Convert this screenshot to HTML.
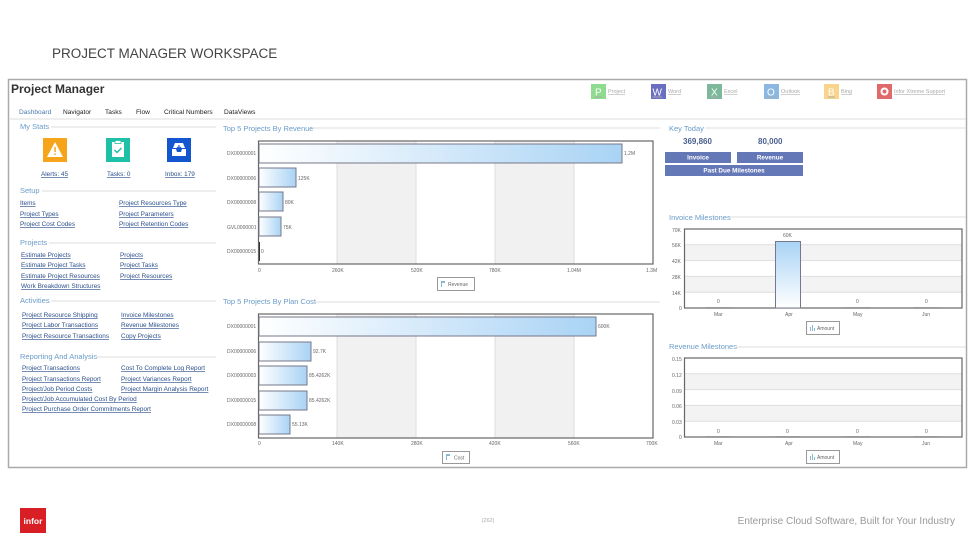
<!DOCTYPE html>
<html><head><meta charset="utf-8"><style>
html,body{margin:0;padding:0;background:#fff;width:975px;height:548px;overflow:hidden}
svg{display:block;font-family:"Liberation Sans",sans-serif}
.l{fill:#2b4f8a;font-size:6.4px;text-decoration:underline}
.h{fill:#6a9bc9;font-size:7.5px}
.ax{fill:#666;font-size:5px}
.tab{fill:#222;font-size:6.6px}
</style></head><body>
<svg width="975" height="548" viewBox="0 0 975 548">
<defs>
<linearGradient id="g" x1="0" x2="1" y1="0" y2="0"><stop offset="0" stop-color="#fff"/><stop offset="1" stop-color="#a9d3f5"/></linearGradient>
<linearGradient id="gv" x1="0" x2="0" y1="0" y2="1"><stop offset="0" stop-color="#a9d3f5"/><stop offset="1" stop-color="#fff"/></linearGradient>
</defs>
<text x="52" y="58" font-size="13.5" fill="#444">PROJECT MANAGER WORKSPACE</text>
<rect x="8.5" y="79.5" width="958" height="388" fill="#fff" stroke="#aaa" stroke-width="1.5"/>
<text x="11" y="93" font-size="12" font-weight="bold" fill="#333">Project Manager</text>
<g font-size="5.5" fill="#aaa" text-decoration="underline">
<rect x="591" y="84" width="15" height="15" fill="#8fdb8f"/><text x="595" y="95.5" font-size="10" fill="#fff" text-decoration="none">P</text><text x="608" y="93">Project</text>
<rect x="651" y="84" width="15" height="15" fill="#6a6fc0"/><text x="652.5" y="95.5" font-size="10" fill="#fff" text-decoration="none">W</text><text x="668" y="93">Word</text>
<rect x="707" y="84" width="15" height="15" fill="#7db89a"/><text x="711" y="95.5" font-size="10" fill="#fff" text-decoration="none">X</text><text x="724" y="93">Excel</text>
<rect x="764" y="84" width="15" height="15" fill="#8ab8e0"/><text x="767" y="95.5" font-size="10" fill="#fff" text-decoration="none">O</text><text x="781" y="93">Outlook</text>
<rect x="824" y="84" width="15" height="15" fill="#f8d48c"/><text x="828" y="95.5" font-size="10" fill="#fff" text-decoration="none">B</text><text x="841" y="93">Bing</text>
<rect x="877" y="84" width="15" height="15" fill="#e06a6a"/><circle cx="884.5" cy="91.5" r="4" fill="#fff"/><circle cx="884.5" cy="91.5" r="2" fill="#e06a6a"/><text x="894" y="93">Infor Xtreme Support</text>
</g>
<text x="19" y="114" font-size="6.6" fill="#4a78b0">Dashboard</text>
<text x="63" y="114" class="tab">Navigator</text>
<text x="105" y="114" class="tab">Tasks</text>
<text x="136" y="114" class="tab">Flow</text>
<text x="164" y="114" class="tab">Critical Numbers</text>
<text x="224" y="114" class="tab">DataViews</text>
<line x1="10" y1="119" x2="966" y2="119" stroke="#ddd"/>
<text x="20" y="129" class="h">My Stats</text><line x1="51" y1="127" x2="216" y2="127" stroke="#ddd"/>
<rect x="43" y="138" width="24" height="24" fill="#f6a51a"/><path d="M55 142 L63 157 L47 157 Z" fill="#fff"/><rect x="54.3" y="147" width="1.5" height="5" fill="#f6a51a"/><rect x="54.3" y="153.5" width="1.5" height="1.5" fill="#f6a51a"/>
<rect x="106" y="138" width="24" height="24" fill="#1ec0a8"/><rect x="112" y="142" width="12" height="15" fill="#fff"/><rect x="115" y="140.5" width="6" height="3" fill="#fff" stroke="#1ec0a8" stroke-width=".8"/><path d="M114.5 150 l2.5 2.5 l4.5 -4.5" stroke="#1ec0a8" stroke-width="1.5" fill="none"/>
<rect x="167" y="138" width="24" height="24" fill="#1456d0"/><path d="M172 149 h4 l1 3 h4 l1 -3 h4 v7 h-14 Z M173 148 l2 -5 h8 l2 5" fill="#fff"/><path d="M179 145 v4 m-2 -2 l2 2 l2 -2" stroke="#1456d0" stroke-width="1.2" fill="none"/>
<text x="41" y="176" class="l">Alerts: 45</text><text x="107" y="176" class="l">Tasks: 0</text><text x="165" y="176" class="l">Inbox: 179</text>
<text x="20" y="193" class="h">Setup</text><line x1="42" y1="191" x2="216" y2="191" stroke="#ddd"/>
<text x="20" y="205" class="l">Items</text><text x="119" y="205" class="l">Project Resources Type</text>
<text x="20" y="216" class="l">Project Types</text><text x="119" y="216" class="l">Project Parameters</text>
<text x="20" y="226" class="l">Project Cost Codes</text><text x="119" y="226" class="l">Project Retention Codes</text>
<text x="20" y="245" class="h">Projects</text><line x1="49" y1="243" x2="216" y2="243" stroke="#ddd"/>
<text x="21" y="257" class="l">Estimate Projects</text><text x="120" y="257" class="l">Projects</text>
<text x="21" y="267" class="l">Estimate Project Tasks</text><text x="120" y="267" class="l">Project Tasks</text>
<text x="21" y="278" class="l">Estimate Project Resources</text><text x="120" y="278" class="l">Project Resources</text>
<text x="21" y="288" class="l">Work Breakdown Structures</text>
<text x="20" y="303" class="h">Activities</text><line x1="51" y1="301" x2="216" y2="301" stroke="#ddd"/>
<text x="22" y="317" class="l">Project Resource Shipping</text><text x="121" y="317" class="l">Invoice Milestones</text>
<text x="22" y="327" class="l">Project Labor Transactions</text><text x="121" y="327" class="l">Revenue Milestones</text>
<text x="22" y="338" class="l">Project Resource Transactions</text><text x="121" y="338" class="l">Copy Projects</text>
<text x="20" y="359" class="h">Reporting And Analysis</text><line x1="95" y1="357" x2="216" y2="357" stroke="#ddd"/>
<text x="22" y="370" class="l">Project Transactions</text><text x="121" y="370" class="l">Cost To Complete Log Report</text>
<text x="22" y="381" class="l">Project Transactions Report</text><text x="121" y="381" class="l">Project Variances Report</text>
<text x="22" y="391" class="l">Project/Job Period Costs</text><text x="121" y="391" class="l">Project Margin Analysis Report</text>
<text x="22" y="401" class="l">Project/Job Accumulated Cost By Period</text>
<text x="22" y="411" class="l">Project Purchase Order Commitments Report</text>
<text x="223" y="131" class="h">Top 5 Projects By Revenue</text><line x1="311" y1="128" x2="660" y2="128" stroke="#ddd"/>
<rect x="337" y="141" width="79" height="123" fill="#f1f1f1"/><rect x="495" y="141" width="79" height="123" fill="#f1f1f1"/>
<g stroke="#ddd"><line x1="337" y1="141" x2="337" y2="264"/><line x1="416" y1="141" x2="416" y2="264"/><line x1="495" y1="141" x2="495" y2="264"/><line x1="574" y1="141" x2="574" y2="264"/></g>
<rect x="258.5" y="141" width="394.5" height="123" fill="none" stroke="#666" stroke-width="1.2"/>
<g stroke="#778" stroke-width="1"><rect x="259" y="144" width="363" height="19" fill="url(#g)"/><rect x="259" y="168" width="37" height="19" fill="url(#g)"/><rect x="259" y="192" width="24" height="19" fill="url(#g)"/><rect x="259" y="217" width="22" height="19" fill="url(#g)"/></g>
<line x1="259.5" y1="242" x2="259.5" y2="261" stroke="#333"/>
<g class="ax"><text x="227" y="155">DX00000001</text><text x="227" y="180">DX00000006</text><text x="227" y="204">DX00000008</text><text x="227" y="229">GVL0000001</text><text x="227" y="253">DX00000015</text>
<text x="624" y="155">1.2M</text><text x="298" y="180">125K</text><text x="285" y="204">80K</text><text x="283" y="229">75K</text><text x="261" y="253">0</text>
<text x="258" y="272">0</text><text x="332" y="272">260K</text><text x="411" y="272">520K</text><text x="489" y="272">780K</text><text x="567" y="272">1.04M</text><text x="646" y="272">1.3M</text></g>
<rect x="437.5" y="277.5" width="37" height="13" fill="#fff" stroke="#999"/><rect x="441" y="281" width="1" height="6" fill="#8bc"/><rect x="442" y="281" width="3" height="2" fill="#8bc"/><text x="448" y="286" class="ax">Revenue</text>
<text x="223" y="304" class="h">Top 5 Projects By Plan Cost</text><line x1="313" y1="302" x2="660" y2="302" stroke="#ddd"/>
<rect x="337" y="314" width="79" height="124" fill="#f1f1f1"/><rect x="495" y="314" width="79" height="124" fill="#f1f1f1"/>
<g stroke="#ddd"><line x1="337" y1="314" x2="337" y2="438"/><line x1="416" y1="314" x2="416" y2="438"/><line x1="495" y1="314" x2="495" y2="438"/><line x1="574" y1="314" x2="574" y2="438"/></g>
<rect x="258.5" y="314" width="394.5" height="124" fill="none" stroke="#666" stroke-width="1.2"/>
<g stroke="#778"><rect x="259" y="317" width="337" height="19" fill="url(#g)"/><rect x="259" y="342" width="52" height="19" fill="url(#g)"/><rect x="259" y="366" width="48" height="19" fill="url(#g)"/><rect x="259" y="391" width="48" height="19" fill="url(#g)"/><rect x="259" y="415" width="31" height="19" fill="url(#g)"/></g>
<g class="ax"><text x="227" y="328">DX00000001</text><text x="227" y="353">DX00000006</text><text x="227" y="377">DX00000003</text><text x="227" y="402">DX00000015</text><text x="227" y="426">DX00000008</text>
<text x="598" y="328">600K</text><text x="313" y="353">92.7K</text><text x="309" y="377">85.4262K</text><text x="309" y="402">85.4262K</text><text x="292" y="426">55.13K</text>
<text x="258" y="445">0</text><text x="332" y="445">140K</text><text x="411" y="445">280K</text><text x="489" y="445">420K</text><text x="568" y="445">560K</text><text x="646" y="445">700K</text></g>
<rect x="442.5" y="451.5" width="27" height="12" fill="#fff" stroke="#999"/><rect x="446" y="454" width="1" height="6" fill="#8bc"/><rect x="447" y="454" width="3" height="2" fill="#8bc"/><text x="454" y="459.5" class="ax">Cost</text>
<text x="669" y="131" class="h">Key Today</text><line x1="705" y1="128" x2="966" y2="128" stroke="#ddd"/>
<text x="683" y="144" font-size="8" font-weight="bold" fill="#4a5f90">369,860</text><text x="758" y="144" font-size="8" font-weight="bold" fill="#4a5f90">80,000</text>
<rect x="665" y="152" width="66" height="11" fill="#6478b8"/><rect x="737" y="152" width="66" height="11" fill="#6478b8"/><rect x="665" y="165" width="138" height="11" fill="#6478b8"/>
<g font-size="6.3" font-weight="bold" fill="#fff" text-anchor="middle"><text x="698" y="159.5">Invoice</text><text x="770" y="159.5">Revenue</text><text x="734" y="172.5">Past Due Milestones</text></g>
<text x="669" y="220" class="h">Invoice Milestones</text><line x1="730" y1="217" x2="966" y2="217" stroke="#ddd"/>
<g fill="#f3f3f3"><rect x="685" y="244.8" width="277" height="15.8"/><rect x="685" y="276.4" width="277" height="15.8"/></g>
<g stroke="#ddd"><line x1="685" y1="244.8" x2="962" y2="244.8"/><line x1="685" y1="260.6" x2="962" y2="260.6"/><line x1="685" y1="276.4" x2="962" y2="276.4"/><line x1="685" y1="292.2" x2="962" y2="292.2"/></g>
<rect x="684.5" y="229" width="277.5" height="79" fill="none" stroke="#666" stroke-width="1.2"/>
<rect x="775.5" y="241.5" width="25" height="66.5" fill="url(#gv)" stroke="#778"/>
<g stroke="#999"><line x1="706" y1="307.5" x2="731" y2="307.5"/><line x1="845" y1="307.5" x2="870" y2="307.5"/><line x1="914" y1="307.5" x2="939" y2="307.5"/></g>
<g class="ax"><text x="672" y="232">70K</text><text x="672" y="247">56K</text><text x="672" y="263">42K</text><text x="672" y="279">28K</text><text x="672" y="295">14K</text><text x="679" y="310">0</text>
<text x="783" y="237">60K</text><text x="717" y="303">0</text><text x="856" y="303">0</text><text x="925" y="303">0</text>
<text x="714" y="316">Mar</text><text x="785" y="316">Apr</text><text x="853" y="316">May</text><text x="922" y="316">Jun</text></g>
<rect x="806.5" y="321.5" width="33" height="13" fill="#fff" stroke="#999"/><g fill="#8bc"><rect x="810" y="327" width="1" height="4"/><rect x="812" y="325" width="1" height="6"/><rect x="814" y="328" width="1" height="3"/></g><text x="817" y="330" class="ax">Amount</text>
<text x="669" y="349" class="h">Revenue Milestones</text><line x1="734" y1="347" x2="966" y2="347" stroke="#ddd"/>
<g fill="#f3f3f3"><rect x="685" y="373.8" width="277" height="15.8"/><rect x="685" y="405.4" width="277" height="15.8"/></g>
<g stroke="#ddd"><line x1="685" y1="373.8" x2="962" y2="373.8"/><line x1="685" y1="389.6" x2="962" y2="389.6"/><line x1="685" y1="405.4" x2="962" y2="405.4"/><line x1="685" y1="421.2" x2="962" y2="421.2"/></g>
<rect x="684.5" y="358" width="277.5" height="79" fill="none" stroke="#666" stroke-width="1.2"/>
<g stroke="#999"><line x1="706" y1="436.5" x2="731" y2="436.5"/><line x1="775" y1="436.5" x2="800" y2="436.5"/><line x1="845" y1="436.5" x2="870" y2="436.5"/><line x1="914" y1="436.5" x2="939" y2="436.5"/></g>
<g class="ax"><text x="672" y="361">0.15</text><text x="672" y="377">0.12</text><text x="672" y="393">0.09</text><text x="672" y="408">0.06</text><text x="672" y="424">0.03</text><text x="679" y="439">0</text>
<text x="717" y="433">0</text><text x="786" y="433">0</text><text x="856" y="433">0</text><text x="925" y="433">0</text>
<text x="714" y="445">Mar</text><text x="785" y="445">Apr</text><text x="853" y="445">May</text><text x="922" y="445">Jun</text></g>
<rect x="806.5" y="450.5" width="33" height="13" fill="#fff" stroke="#999"/><g fill="#8bc"><rect x="810" y="456" width="1" height="4"/><rect x="812" y="454" width="1" height="6"/><rect x="814" y="457" width="1" height="3"/></g><text x="817" y="459" class="ax">Amount</text>
<rect x="20" y="508" width="26" height="25" fill="#d81f26"/><text x="33" y="524" font-size="8.5" font-weight="bold" fill="#fff" text-anchor="middle">infor</text>
<text x="488" y="522" font-size="5.5" fill="#aaa" text-anchor="middle">(262)</text>
<text x="955" y="524" font-size="10" fill="#999" text-anchor="end">Enterprise Cloud Software, Built for Your Industry</text>
</svg>
</body></html>
